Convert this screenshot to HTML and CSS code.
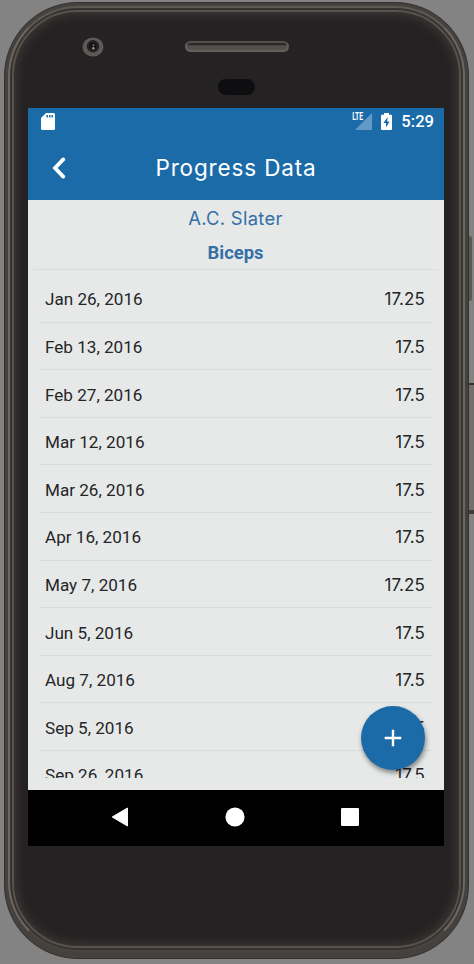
FILE: index.html
```html
<!DOCTYPE html>
<html lang="en">
<head>
<meta charset="UTF-8">
<meta name="viewport" content="width=device-width, initial-scale=1.0">
<title>Progress Data</title>
<link rel="stylesheet" href="styles.css">
</head>
<body>

<div class="side-button power"></div>
<div class="side-button volume"></div>

<div class="phone">
    <div class="frame-line">
    <div class="bezel">
        <div class="phone-top">
            <svg class="camera" width="22" height="20" viewBox="0 0 22 20">
                <ellipse cx="11" cy="10" rx="10.5" ry="9.5" fill="#5e5a58"/>
                <circle cx="11" cy="9.3" r="6.2" fill="#252223"/>
                <circle cx="11" cy="8.8" r="3.6" fill="#151314"/>
                <circle cx="11.5" cy="8.3" r="1" fill="#777"/>
                <circle cx="11.3" cy="11.3" r="1.2" fill="#999"/>
            </svg>
            <div class="speaker"></div>
            <div class="sensor"></div>
        </div>

        <div class="screen">
            <div class="status-bar">
                <svg class="sd-icon" width="14" height="17" viewBox="0 0 14 17">
                    <path d="M5 0H12.5Q14 0 14 1.5V15.5Q14 17 12.5 17H1.5Q0 17 0 15.5V5Z" fill="#fff"/>
                    <path d="M5.5 2H7V4.5H5.5ZM8 2H9.5V4.5H8ZM10.5 2H12V4.5H10.5Z" fill="#1c6ba9"/>
                </svg>
                <div class="signal">
                    <span class="lte">LTE</span>
                    <svg width="17" height="17" viewBox="0 0 17 17">
                        <path d="M17 0V17H0Z" fill="#6299c5"/>
                    </svg>
                </div>
                <svg class="battery" width="11" height="17" viewBox="0 0 11 17">
                    <path d="M3 0H8V1.7H10Q11 1.7 11 2.7V16Q11 17 10 17H1Q0 17 0 16V2.7Q0 1.7 1 1.7H3Z" fill="#fff"/>
                    <path d="M6.6 4L2.4 10H5V14.5L8.6 8.4H6.2Z" fill="#1c6ba9"/>
                </svg>
                <span class="clock">5:29</span>
            </div>

            <div class="title-bar">
                <svg class="back" width="14" height="22" viewBox="0 0 14 22">
                    <path d="M11.2 2.4L3 11L11.2 19.6" fill="none" stroke="#fff" stroke-width="3.8" stroke-linecap="round"/>
                </svg>
                <h1>Progress Data</h1>
            </div>

            <div class="content">
                <div class="subject">
                    <div class="name">A.C. Slater</div>
                    <div class="measure">Biceps</div>
                </div>
                <ul class="entries">
                    <li><span>Jan 26, 2016</span><span class="value">17.25</span></li>
                    <li><span>Feb 13, 2016</span><span class="value">17.5</span></li>
                    <li><span>Feb 27, 2016</span><span class="value">17.5</span></li>
                    <li><span>Mar 12, 2016</span><span class="value">17.5</span></li>
                    <li><span>Mar 26, 2016</span><span class="value">17.5</span></li>
                    <li><span>Apr 16, 2016</span><span class="value">17.5</span></li>
                    <li><span>May 7, 2016</span><span class="value">17.25</span></li>
                    <li><span>Jun 5, 2016</span><span class="value">17.5</span></li>
                    <li><span>Aug 7, 2016</span><span class="value">17.5</span></li>
                    <li><span>Sep 5, 2016</span><span class="value">17.5</span></li>
                    <li><span>Sep 26, 2016</span><span class="value">17.5</span></li>
                </ul>
                <button class="add" aria-label="Add entry">
                    <svg width="18" height="18" viewBox="0 0 18 18">
                        <path d="M9 0.7V17.3M0.7 9H17.3" stroke="#fff" stroke-width="2.4"/>
                    </svg>
                </button>
            </div>

            <div class="nav-bar">
                <svg width="18" height="20" viewBox="0 0 18 20">
                    <path d="M16.5 1V19L1.2 10Z" fill="#fff" stroke="#fff" stroke-linejoin="round"/>
                </svg>
                <svg width="20" height="20" viewBox="0 0 20 20">
                    <circle cx="10" cy="10" r="9.6" fill="#fff"/>
                </svg>
                <svg width="18" height="18" viewBox="0 0 18 18">
                    <rect width="18" height="18" rx="1.2" fill="#fff"/>
                </svg>
            </div>
        </div>
    </div>
    </div>
</div>

</body>
</html>
```

FILE: styles.css
```css
* {
    box-sizing: border-box;
}
body {
    margin: 0;
    height: 964px;
    overflow: hidden;
    background-color: #838383;
    font-family: Roboto, sans-serif;
    position: relative;
}
.phone {
    position: relative;
    width: 465px;
    height: 957px;
    margin: 2px 0 0 4px;
    padding: 3px 3px 6px;
    border-radius: 74px;
    background-color: #45413e;
    border: 1px solid #34302e;
}
.frame-line {
    height: 100%;
    padding: 2px;
    border: 2px solid #6c6762;
    border-top-color: #5c5854;
    border-bottom-color: #49443f;
    border-radius: 70px;
    background-color: #38332f;
}
.bezel {
    height: 100%;
    border: 2px solid #56524e;
    border-radius: 66px;
    background-color: #252223;
    box-shadow: inset 0 0 10px 3px #3b3734;
    padding: 0 14px;
}
.phone-top {
    position: relative;
    height: 96px;
}
.camera {
    position: absolute;
    left: 54px;
    top: 25px;
}
.speaker {
    position: absolute;
    left: 157px;
    top: 29px;
    width: 104px;
    height: 11px;
    border: 2px solid #625f5d;
    border-top-color: #53504e;
    border-radius: 6px;
    background: linear-gradient(#2b2829 35%, #53504e 36%);
}
.sensor {
    position: absolute;
    left: 190px;
    top: 67px;
    width: 37px;
    height: 16px;
    border-radius: 8px;
    background-color: #0e0d10;
}
.side-button {
    position: absolute;
    left: 465px;
}
.power {
    top: 236px;
    width: 7px;
    height: 65px;
    background-color: #5b5957;
    border-radius: 2px;
}
.volume {
    top: 383px;
    width: 9px;
    height: 131px;
    background-color: #736f6c;
    border-top: 2px solid #343130;
    border-bottom: 4px solid #3f3b39;
}
.screen {
    width: 416px;
    height: 738px;
    background-color: #e7e9e9;
    display: flex;
    flex-direction: column;
}
.status-bar {
    height: 27px;
    background-color: #1c6ba9;
    color: #fff;
    display: flex;
    align-items: center;
    padding: 0 10px 0 13px;
}
.signal {
    margin-left: auto;
    display: flex;
    position: relative;
}
.lte {
    position: absolute;
    right: 9px;
    top: -1px;
    font-size: 10px;
    line-height: 10px;
    font-weight: 700;
    transform: scaleX(0.68);
    transform-origin: right;
}
.battery {
    margin-left: 9px;
}
.clock {
    margin-left: 9px;
    font-size: 16.6px;
    font-weight: 500;
}
.title-bar {
    height: 65px;
    background-color: #1c6ba9;
    color: #fff;
    position: relative;
    display: flex;
    align-items: center;
    justify-content: center;
}
.back {
    position: absolute;
    left: 24px;
    top: 22px;
}
h1 {
    margin: 0;
    font-family: Inter, sans-serif;
    font-size: 22.5px;
    font-weight: 400;
    letter-spacing: 0.85px;
}
.content {
    position: relative;
    height: 590px;
}
.subject {
    height: 70px;
    margin: 0 6px 0 5px;
    border-bottom: 1px solid #dadddd;
    color: #346fa5;
    text-align: center;
}
.name {
    font-family: Inter, sans-serif;
    font-size: 18.4px;
    line-height: 36px;
    letter-spacing: 0.3px;
}
.measure {
    font-size: 18.4px;
    line-height: 33px;
    font-weight: 700;
}
.entries {
    list-style: none;
    margin: 5px 12px 0;
    padding: 0;
    height: 503px;
    overflow: hidden;
}
.entries li {
    height: 47.62px;
    padding: 2px 7px 0 5px;
    border-bottom: 1px solid #d9dcdc;
    display: flex;
    justify-content: space-between;
    align-items: center;
    font-size: 17.1px;
    color: #242526;
}
.value {
    font-family: Inter, sans-serif;
    font-size: 17px;
    letter-spacing: 0.1px;
}
.add {
    position: absolute;
    left: 333px;
    top: 505.5px;
    width: 64px;
    height: 64px;
    padding: 0;
    border: none;
    border-radius: 50%;
    background-color: #1c6ba9;
    box-shadow: 1px 3px 5px rgba(0, 0, 0, 0.45);
    display: flex;
    align-items: center;
    justify-content: center;
    cursor: pointer;
}
.nav-bar {
    height: 56px;
    background-color: #000;
    display: flex;
    align-items: center;
    justify-content: center;
    gap: 96px;
    padding: 0 2px 2px 0;
}
```
